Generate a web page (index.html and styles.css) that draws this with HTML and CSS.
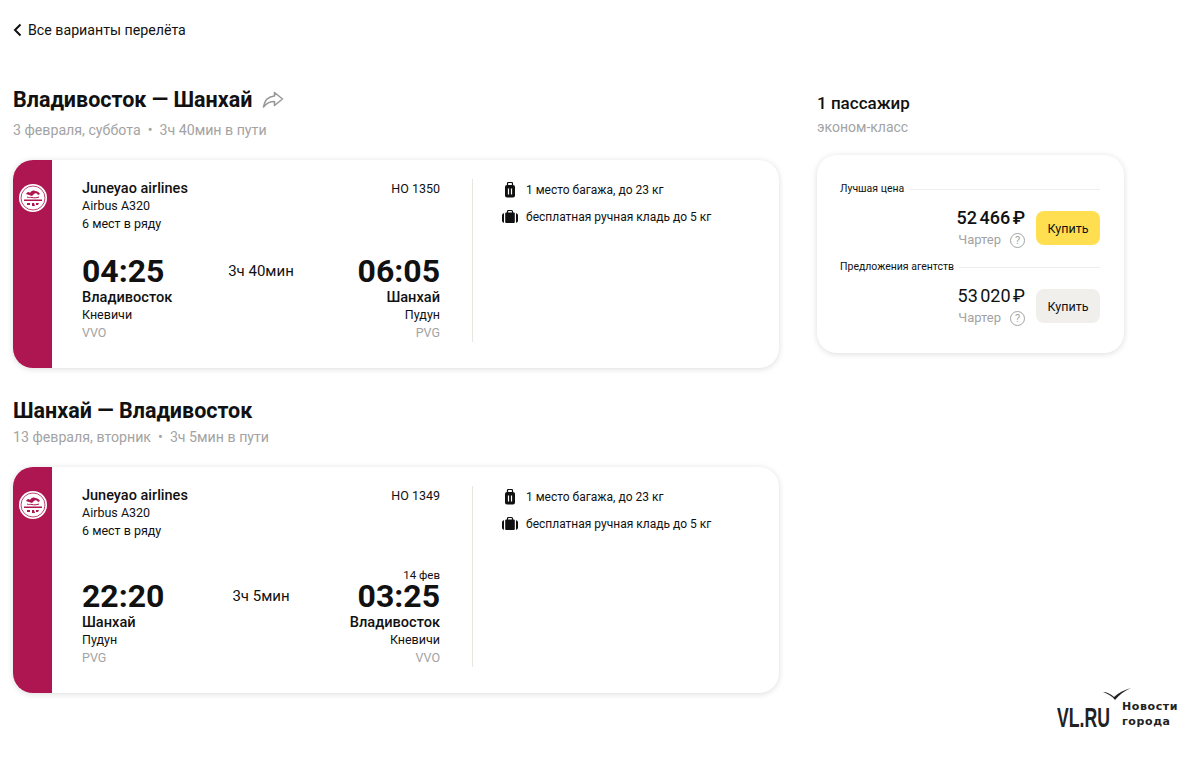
FILE: index.html
```html
<!DOCTYPE html>
<html lang="ru">
<head>
  <meta charset="UTF-8">
  <title>Все варианты перелёта</title>
  <link rel="stylesheet" href="styles.css">
</head>
<body>
  <!-- shared icons -->
  <svg class="icon-defs" width="0" height="0">
    <symbol id="airline-logo" viewBox="0 0 28 28">
      <circle cx="14" cy="14" r="14" fill="#fff"/>
      <circle cx="14" cy="14" r="12" fill="none" stroke="#ad1650" stroke-width=".8"/>
      <path d="M7 10c1-2 3-3 4-1 1-2 3-3 5-2 2 0 4 1 5 3l-2 1c-1-2-3-2-4-1l-2 2c-2-1-4-1-6-2z" fill="#ad1650"/>
      <path d="M8 13c2 1 3 0 5 .5s4 .5 7-.5" fill="none" stroke="#ad1650" stroke-width="1"/>
      <path d="M5 15.500h18v1.500H5z" fill="#ad1650"/>
      <path d="M8 19h3v2H8zM13 19h2l1 3h-3zM17 19h3l-1 2h-2z" fill="#ad1650"/>
    </symbol>
    <symbol id="suitcase" viewBox="0 0 16 16">
      <path d="M5.500 3V1.500a1 1 0 0 1 1-1h3a1 1 0 0 1 1 1V3" fill="none" stroke="#111" stroke-width="1.200"/>
      <rect x="3" y="3" width="10" height="12.500" rx="2" fill="#111"/>
      <path d="M6.500 6.500v6M9.500 6.500v6" stroke="#fff" stroke-width="1.200"/>
    </symbol>
    <symbol id="handbag" viewBox="0 0 16 16">
      <path d="M5.500 4V2.500a1 1 0 0 1 1-1h3a1 1 0 0 1 1 1V4" fill="none" stroke="#111" stroke-width="1.200"/>
      <rect x="3.200" y="3.500" width="9.600" height="10.500" rx="1" fill="#111"/>
      <path d="M2 4.200C.6 4.500 0 5.200 0 6.500v5c0 1.300.6 2 2 2.300zM14 4.200c1.400.3 2 1 2 2.300v5c0 1.300-.6 2-2 2.300z" fill="#111"/>
    </symbol>
  </svg>

  <a class="back-link" href="#">
    <svg width="9" height="14" viewBox="0 0 9 14"><path d="M7.500 1.500 2 7l5.500 5.500" fill="none" stroke="#111" stroke-width="2"/></svg>
    Все варианты перелёта
  </a>

  <div class="page">
    <div class="flights">
      <div class="route-head">
        <h2>Владивосток — Шанхай
          <svg class="share-icon" width="22" height="18" viewBox="0 0 22 18"><path d="M12.500 1.500 20.500 8l-8 6.500v-4C8 10.500 4.500 12 1.500 16 2.500 10 6 5.500 12.500 5z" fill="none" stroke="#999" stroke-width="1.600" stroke-linejoin="round"/></svg>
        </h2>
        <p class="route-sub">3 февраля, суббота &nbsp;•&nbsp; 3ч 40мин в пути</p>
      </div>

      <div class="flight-card">
        <div class="stripe">
          <svg class="airline-logo" width="28" height="28"><use href="#airline-logo"/></svg>
        </div>
        <div class="flight-main">
          <div class="flight-top">
            <div>
              <div class="airline">Juneyao airlines</div>
              <div class="small-line">Airbus A320</div>
              <div class="small-line">6 мест в ряду</div>
            </div>
            <div class="flight-no">HO 1350</div>
          </div>
          <div class="times">
            <div class="time">04:25</div>
            <div class="duration">3ч 40мин</div>
            <div class="time">06:05</div>
          </div>
          <div class="places">
            <div>
              <div class="city">Владивосток</div>
              <div class="small-line">Кневичи</div>
              <div class="small-line gray">VVO</div>
            </div>
            <div class="align-right">
              <div class="city">Шанхай</div>
              <div class="small-line">Пудун</div>
              <div class="small-line gray">PVG</div>
            </div>
          </div>
        </div>
        <div class="baggage">
          <div class="baggage-row">
            <svg width="16" height="16"><use href="#suitcase"/></svg>
            1 место багажа, до 23 кг
          </div>
          <div class="baggage-row">
            <svg width="16" height="16"><use href="#handbag"/></svg>
            бесплатная ручная кладь до 5 кг
          </div>
        </div>
      </div>

      <div class="route-head second">
        <h2>Шанхай — Владивосток</h2>
        <p class="route-sub">13 февраля, вторник &nbsp;•&nbsp; 3ч 5мин в пути</p>
      </div>

      <div class="flight-card">
        <div class="stripe">
          <svg class="airline-logo" width="28" height="28"><use href="#airline-logo"/></svg>
        </div>
        <div class="flight-main">
          <div class="flight-top">
            <div>
              <div class="airline">Juneyao airlines</div>
              <div class="small-line">Airbus A320</div>
              <div class="small-line">6 мест в ряду</div>
            </div>
            <div class="flight-no">HO 1349</div>
          </div>
          <div class="times">
            <div class="time">22:20</div>
            <div class="duration">3ч 5мин</div>
            <div class="align-right">
              <div class="next-date">14 фев</div>
              <div class="time">03:25</div>
            </div>
          </div>
          <div class="places">
            <div>
              <div class="city">Шанхай</div>
              <div class="small-line">Пудун</div>
              <div class="small-line gray">PVG</div>
            </div>
            <div class="align-right">
              <div class="city">Владивосток</div>
              <div class="small-line">Кневичи</div>
              <div class="small-line gray">VVO</div>
            </div>
          </div>
        </div>
        <div class="baggage">
          <div class="baggage-row">
            <svg width="16" height="16"><use href="#suitcase"/></svg>
            1 место багажа, до 23 кг
          </div>
          <div class="baggage-row">
            <svg width="16" height="16"><use href="#handbag"/></svg>
            бесплатная ручная кладь до 5 кг
          </div>
        </div>
      </div>
    </div>

    <div class="sidebar">
      <div class="passengers">1 пассажир</div>
      <div class="cabin">эконом-класс</div>
      <div class="price-card">
        <div class="offer-label"><span>Лучшая цена</span></div>
        <div class="offer">
          <div class="offer-info">
            <div class="price best">52 466 ₽</div>
            <div class="charter">Чартер <span class="help">?</span></div>
          </div>
          <button class="buy-button yellow">Купить</button>
        </div>
        <div class="offer-label"><span>Предложения агентств</span></div>
        <div class="offer">
          <div class="offer-info">
            <div class="price">53 020 ₽</div>
            <div class="charter">Чартер <span class="help">?</span></div>
          </div>
          <button class="buy-button">Купить</button>
        </div>
      </div>
    </div>
  </div>

  <!-- watermark -->
  <div class="watermark">
    <svg class="bird" width="28" height="12" viewBox="0 0 28 12"><path d="M0 4c4 0 8 2 11 5C15 5 21 2 28 0 21 3 16 7 12 12 9 8 5 6 0 4z" fill="#222"/></svg>
    <span class="vl">VL.RU</span>
    <span class="vl-text">Новости<br>города</span>
  </div>
</body>
</html>
```

FILE: styles.css
```css
body {
  margin: 0;
  padding: 21px 0 0 13px;
  font-family: Roboto, "Noto Sans", Arial, sans-serif;
  color: #111;
  background-color: white;
  height: 736px;
  overflow: hidden;
}

.icon-defs {
  position: absolute;
}

.back-link {
  display: flex;
  align-items: center;
  gap: 6px;
  height: 17px;
  font-size: 14.200px;
  color: #111;
  text-decoration: none;
}

.page {
  display: flex;
  margin-top: 41px;
}

.flights {
  width: 766px;
}

.route-head {
  height: 81px;
  padding-top: 8px;
  box-sizing: border-box;
}

.route-head.second {
  height: 77px;
  margin-top: 22px;
}

.route-head.second .route-sub {
  margin-top: 4px;
}

h2 {
  margin: 0;
  font-size: 21.500px;
  line-height: 26px;
  font-weight: 700;
  display: flex;
  align-items: center;
  gap: 10px;
}

.route-sub {
  margin: 8px 0 0;
  font-size: 14.200px;
  line-height: 18px;
  color: #a3a3a3;
}

.flight-card {
  display: flex;
  border-radius: 20px;
  background-color: white;
  box-shadow: 0 1px 6px rgba(0, 0, 0, 0.14);
  overflow: hidden;
}

.stripe {
  width: 39px;
  flex-shrink: 0;
  background-color: #ad1650;
  padding: 24px 0 0 6px;
  box-sizing: border-box;
}

.airline-logo {
  display: block;
}

.flight-main {
  width: 358px;
  margin-left: 30px;
  padding: 20px 0 27px;
}

.flight-top {
  display: flex;
  justify-content: space-between;
  align-items: flex-start;
}

.airline {
  font-size: 14.500px;
  line-height: 17px;
  font-weight: 500;
}

.small-line {
  font-size: 12.500px;
  line-height: 17.500px;
}

.gray {
  color: #a3a3a3;
}

.flight-no {
  font-size: 12.500px;
  line-height: 17px;
}

.times {
  display: flex;
  justify-content: space-between;
  align-items: flex-end;
  margin-top: 25px;
}

.time {
  font-size: 32px;
  line-height: 28px;
  font-weight: 700;
}

.duration {
  font-size: 15px;
  line-height: 28px;
}

.next-date {
  font-size: 11.500px;
  line-height: 14px;
  margin-top: 4px;
}

.places {
  display: flex;
  justify-content: space-between;
  margin-top: 3px;
}

.city {
  font-size: 14.600px;
  line-height: 18px;
  font-weight: 500;
}

.align-right {
  text-align: right;
}

.baggage {
  margin: 19px 0 26px 32px;
  padding: 1px 0 0 29px;
  border-left: 1px solid #e8e6e1;
}

.baggage-row {
  display: flex;
  align-items: center;
  gap: 8px;
  height: 20px;
  margin-bottom: 7px;
  font-size: 12px;
}

.sidebar {
  width: 307px;
  margin-left: 38px;
}

.passengers {
  font-size: 17px;
  line-height: 22px;
  font-weight: 500;
  margin-top: 13px;
}

.cabin {
  font-size: 14px;
  line-height: 18px;
  color: #a3a3a3;
  margin-top: 4px;
}

.price-card {
  margin-top: 19px;
  padding: 27px 24px 30px 23px;
  border-radius: 20px;
  box-shadow: 0 1px 6px rgba(0, 0, 0, 0.14);
}

.offer-label {
  display: flex;
  align-items: center;
  gap: 5px;
  font-size: 10.500px;
  line-height: 14px;
}

.offer-label::after {
  content: "";
  flex: 1;
  height: 1px;
  background-color: #eeeeee;
}

.offer {
  display: flex;
  justify-content: flex-end;
  align-items: flex-start;
  gap: 11px;
  height: 34px;
  margin-top: 15px;
  margin-bottom: 15px;
}

.offer:last-child {
  margin-bottom: 0;
}

.offer-info {
  text-align: right;
  margin-top: -4px;
}

.price {
  font-size: 18px;
  line-height: 22px;
  word-spacing: -2px;
}

.price.best {
  font-weight: 500;
}

.charter {
  display: flex;
  align-items: center;
  justify-content: flex-end;
  gap: 9px;
  margin-top: 2px;
  font-size: 13px;
  line-height: 18px;
  color: #a3a3a3;
}

.help {
  display: inline-block;
  width: 13px;
  height: 13px;
  line-height: 13px;
  text-align: center;
  font-size: 11px;
  border: 1px solid #a3a3a3;
  border-radius: 50%;
}

.buy-button {
  width: 64px;
  height: 34px;
  padding: 0;
  border: none;
  border-radius: 8px;
  background-color: #f0efec;
  color: #111;
  font-family: inherit;
  font-size: 12.500px;
  cursor: pointer;
}

.buy-button.yellow {
  background-color: #ffdf4f;
}

.watermark {
  position: absolute;
  left: 1057px;
  top: 688px;
  width: 125px;
  height: 42px;
}

.bird {
  position: absolute;
  left: 46px;
  top: 0;
}

.vl {
  position: absolute;
  left: 0;
  top: 15px;
  font-family: "Liberation Sans", sans-serif;
  font-size: 28px;
  line-height: 30px;
  font-weight: 700;
  color: #222;
  transform: scaleX(0.63);
  transform-origin: left center;
}

.vl-text {
  position: absolute;
  left: 65px;
  top: 11px;
  font-family: "DejaVu Sans", sans-serif;
  font-size: 11px;
  line-height: 15px;
  font-weight: 700;
  letter-spacing: 0.6px;
  color: #222;
}
```
